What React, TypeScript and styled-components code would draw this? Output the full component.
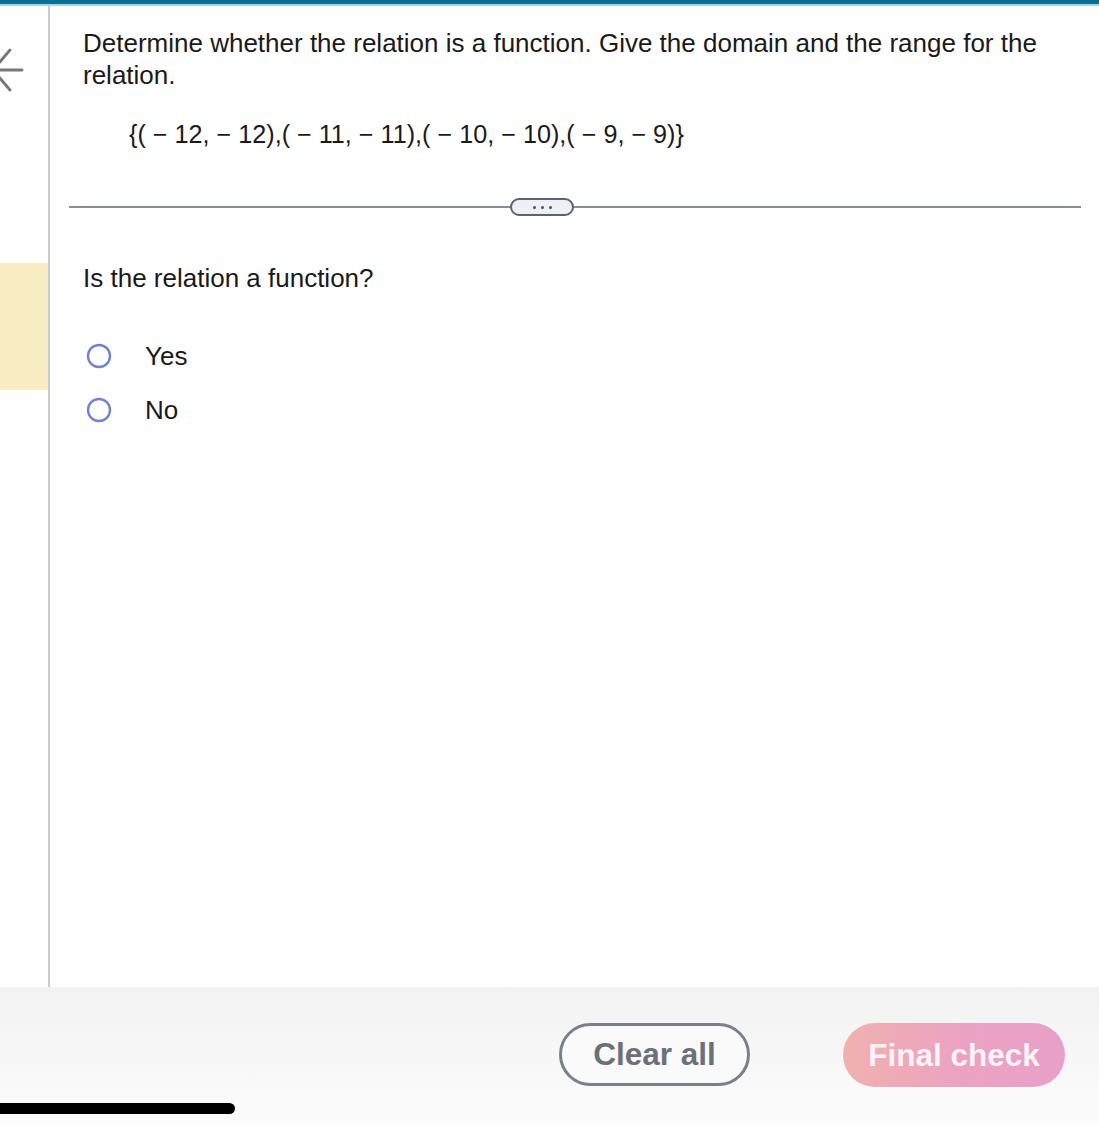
import * as React from 'react';
import styled, { createGlobalStyle } from 'styled-components';

const GlobalStyle = createGlobalStyle`
  html, body {
    margin: 0;
    padding: 0;
    background: #fff;
  }
  body {
    font-family: 'Liberation Sans', Arial, Helvetica, sans-serif;
    color: #1a1a1a;
  }
`;

const BackArrow = () => (
  <svg width="30" height="50" viewBox="0 0 30 50">
    <path
      d="M-7 25 H22 M10 5 L-7 25 L10 45"
      fill="none"
      stroke="#777"
      strokeWidth="2.8"
      strokeLinecap="round"
    />
  </svg>
);

const Radio = () => (
  <svg width="26" height="26" viewBox="0 0 26 26">
    <circle cx="13" cy="13" r="11" fill="#fff" stroke="#7282d2" strokeWidth="2.4" />
  </svg>
);

const App = () => {
  return (
    <>
      <GlobalStyle />
      <Page>
        <TopBar />
        <Main>
          <Rail>
            <ArrowSlot>
              <BackArrow />
            </ArrowSlot>
            <Highlight />
          </Rail>
          <Content>
            <Question>
              Determine whether the relation is a function. Give the domain and the range for the
              relation.
            </Question>
            <Relation>{'{( − 12, − 12),( − 11, − 11),( − 10, − 10),( − 9, − 9)}'}</Relation>
            <Divider>
              <MoreButton>
                <Dot />
                <Dot />
                <Dot />
              </MoreButton>
            </Divider>
            <Prompt>Is the relation a function?</Prompt>
            <Options>
              <Option>
                <Radio />
                <OptionLabel>Yes</OptionLabel>
              </Option>
              <Option>
                <Radio />
                <OptionLabel>No</OptionLabel>
              </Option>
            </Options>
          </Content>
        </Main>
        <Footer>
          <ClearButton>Clear all</ClearButton>
          <FinalButton>Final check</FinalButton>
          <HomeIndicator />
        </Footer>
      </Page>
    </>
  );
};

const Page = styled.div`
  width: 1099px;
  height: 1125px;
  display: flex;
  flex-direction: column;
  overflow: hidden;
`;

const TopBar = styled.div`
  height: 4px;
  background: #0e6f95;
  border-bottom: 2px solid #a9d3e6;
  flex: none;
`;

const Main = styled.div`
  flex: 1;
  display: flex;
  min-height: 0;
`;

const Rail = styled.div`
  width: 48px;
  flex: none;
  border-right: 2px solid #c9cad6;
  display: flex;
  flex-direction: column;
`;

const ArrowSlot = styled.div`
  margin-top: 39px;
  height: 50px;
  overflow: hidden;
`;

const Highlight = styled.div`
  margin-top: 168px;
  height: 127px;
  background: #f9edc3;
`;

const Content = styled.div`
  flex: 1;
  padding: 21px 18px 0 33px;
  display: flex;
  flex-direction: column;
`;

const Question = styled.p`
  margin: 0;
  font-size: 26px;
  line-height: 32px;
  max-width: 960px;
`;

const Relation = styled.div`
  margin: 27px 0 0 46px;
  font-size: 25.2px;
  line-height: 32px;
`;

const Divider = styled.div`
  margin: 56px 0 0 -14px;
  height: 2px;
  background: #8a8d96;
  position: relative;
`;

const MoreButton = styled.div`
  position: absolute;
  top: -8px;
  left: 441px;
  width: 60px;
  height: 14px;
  border: 2px solid #5e626b;
  border-radius: 9px;
  background: #eef0f5;
  display: flex;
  align-items: center;
  justify-content: center;
  gap: 5px;
`;

const Dot = styled.span`
  width: 3px;
  height: 3px;
  border-radius: 50%;
  background: #4a4d55;
`;

const Prompt = styled.div`
  margin-top: 54px;
  font-size: 26px;
  line-height: 32px;
`;

const Options = styled.div`
  margin-top: 46px;
  display: flex;
  flex-direction: column;
  gap: 22px;
`;

const Option = styled.label`
  display: flex;
  align-items: center;
  height: 32px;
  margin-left: 3px;
`;

const OptionLabel = styled.span`
  margin-left: 33px;
  font-size: 26px;
  line-height: 32px;
`;

const Footer = styled.div`
  height: 138px;
  flex: none;
  position: relative;
  background: linear-gradient(#f2f2f3, #fcfcfc);
  display: flex;
  align-items: flex-start;
  justify-content: flex-end;
  padding: 36px 34px 0 0;
  box-sizing: border-box;
  gap: 93px;
`;

const PillButton = styled.button`
  height: 63px;
  border-radius: 32px;
  font-family: 'Liberation Sans', Arial, Helvetica, sans-serif;
  font-weight: 700;
  font-size: 31.5px;
  cursor: pointer;
  box-sizing: border-box;
  padding: 0;
`;

const ClearButton = styled(PillButton)`
  width: 191px;
  background: #fafafb;
  border: 3px solid #7b7f89;
  color: #6c7079;
`;

const FinalButton = styled(PillButton)`
  width: 222px;
  height: 64px;
  border: none;
  color: #fdf2f6;
  background: linear-gradient(90deg, #f0b1b0, #eba2c2 55%, #e8a0c9);
`;

const HomeIndicator = styled.div`
  position: absolute;
  left: -6px;
  bottom: 11px;
  width: 241px;
  height: 11px;
  border-radius: 6px;
  background: #000;
`;

export default App;
